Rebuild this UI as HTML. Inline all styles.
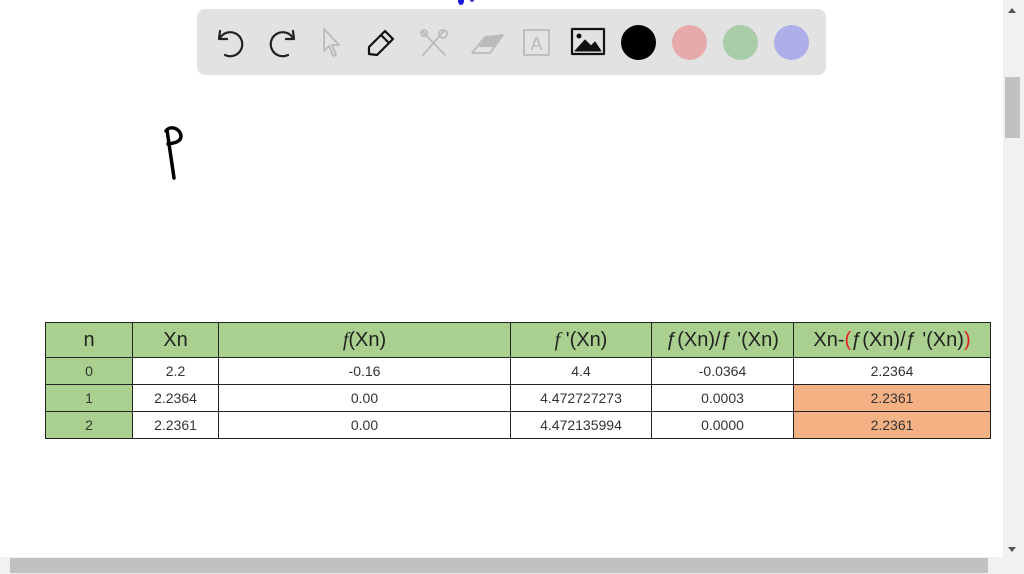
<!DOCTYPE html>
<html><head><meta charset="utf-8"><style>
body{margin:0;width:1024px;height:574px;background:#fff;position:relative;overflow:hidden;font-family:"Liberation Sans",sans-serif}
.tb{position:absolute;left:197px;top:9px;width:629px;height:66px;background:#e2e2e2;border-radius:8px}
.c{position:absolute;top:25px;width:35px;height:35px;border-radius:50%}
table{position:absolute;left:45px;top:322px;border-collapse:collapse;font-family:"Liberation Sans",sans-serif}
td{border:1.5px solid #222;text-align:center;padding:0;color:#333;font-size:14px;height:26px}
tr.h td{background:#a9d08e;font-size:20px;height:34px;color:#222}
td.g{background:#a9d08e}
td.o{background:#f4b183}
.r{color:#e02020}
</style></head><body>
<svg style="position:absolute;left:450px;top:0" width="30" height="8"><ellipse cx="11" cy="1" rx="3" ry="4" fill="#1a1adf"/><circle cx="22" cy="0" r="2" fill="#4040e0"/></svg>
<div class="tb"></div>
<svg style="position:absolute;left:197px;top:9px" width="629" height="66" fill="none" stroke-linecap="round" stroke-linejoin="round">
<g stroke="#222" stroke-width="2.2">
<path d="M23 22 L22 30 L30 30"/><path d="M23 29 A12 12 0 1 1 28 46"/>
<path d="M96 22 L97 30 L89 30"/><path d="M96 29 A12 12 0 1 0 91 46"/>
</g>
<path d="M127 20 L127 42 L132 37 L136 47 L139 46 L135 36 L142 36 Z" stroke="#bbb" stroke-width="1.8"/>
<path d="M172 45 L172 38 L188 22 L196 30 L180 46 Z M184 26 L192 34" stroke="#111" stroke-width="2.2"/>
<g stroke="#bbb" stroke-width="1.8"><path d="M225 22 L248 46 M247 22 L226 46"/><circle cx="227" cy="24" r="3"/><circle cx="246" cy="25" r="4"/></g>
<path d="M275 44 L288 28 L306 26 L293 44 Z" stroke="#bbb" stroke-width="1.8"/><path d="M288 28 L306 26 L297 38 L282 38 Z" fill="#bbb"/>
<rect x="327" y="21" width="25" height="25" stroke="#bbb" stroke-width="1.8"/>
<text x="339.5" y="41" text-anchor="middle" font-family="Liberation Sans" font-size="18" fill="#bbb">A</text>
<rect x="375" y="20" width="32" height="25" stroke="#111" stroke-width="2.2"/>
<circle cx="382" cy="27" r="2.5" fill="#111"/><path d="M378 42 L388 31 L394 37 L398 33 L404 42 Z" fill="#111" stroke="#111"/>
</svg>
<div class="c" style="left:621px;background:#000"></div>
<div class="c" style="left:672px;background:#e6aaaa"></div>
<div class="c" style="left:723px;background:#a9cca9"></div>
<div class="c" style="left:774px;background:#aeaee8"></div>
<svg style="position:absolute;left:150px;top:120px" width="40" height="70" fill="none"><path d="M16 11 C20 5 30 8 31 16 C31 22 24 23 18 24 M17 10 L24 58" stroke="#000" stroke-width="3.5" stroke-linecap="round"/></svg>
<table>
<tr class="h"><td style="width:86px">n</td><td style="width:85px">Xn</td><td style="width:291px"><i style="font-family:'Liberation Serif'">f</i>(Xn)</td><td style="width:140px"><i style="font-family:'Liberation Serif'">f</i> '(Xn)</td><td style="width:141px">ƒ(Xn)/ƒ '(Xn)</td><td style="width:196px">Xn-<span class="r">(</span>ƒ(Xn)/ƒ '(Xn)<span class="r">)</span></td></tr>
<tr><td class="g">0</td><td>2.2</td><td>-0.16</td><td>4.4</td><td>-0.0364</td><td>2.2364</td></tr>
<tr><td class="g">1</td><td>2.2364</td><td>0.00</td><td>4.472727273</td><td>0.0003</td><td class="o">2.2361</td></tr>
<tr><td class="g">2</td><td>2.2361</td><td>0.00</td><td>4.472135994</td><td>0.0000</td><td class="o">2.2361</td></tr>
</table>
<div style="position:absolute;left:1003px;top:0;width:21px;height:574px;background:#f1f1f1"></div>
<div style="position:absolute;left:1005px;top:77px;width:15px;height:61px;background:#c1c1c1"></div>
<div style="position:absolute;left:1008px;top:8px;width:0;height:0;border:4px solid transparent;border-bottom:5px solid #555;border-top:0"></div>
<div style="position:absolute;left:1008px;top:547px;width:0;height:0;border:4px solid transparent;border-top:5px solid #555;border-bottom:0"></div>
<div style="position:absolute;left:0;top:557px;width:1003px;height:17px;background:#f1f1f1"></div>
<div style="position:absolute;left:10px;top:558px;width:978px;height:15px;background:#c1c1c1"></div>
</body></html>
